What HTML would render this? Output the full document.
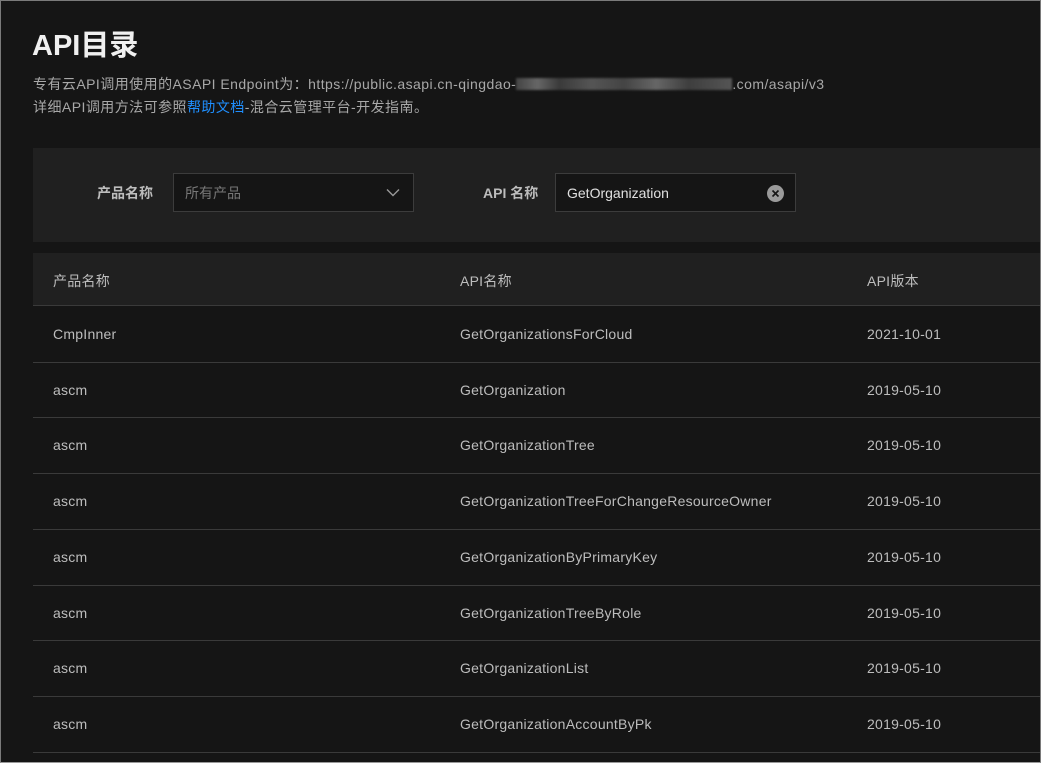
<!DOCTYPE html>
<html><head><meta charset="utf-8"><style>
*{margin:0;padding:0;box-sizing:border-box}
html,body{width:1041px;height:763px;overflow:hidden;background:#151515}
body{font-family:"Liberation Sans","Noto Sans CJK SC",sans-serif;color:#c8c8c8;position:relative}
.frame{position:absolute;left:0;top:0;width:1041px;height:763px;border:1px solid #7a7a7a;border-bottom-color:#999}
h1{position:absolute;left:32px;top:22px;font-size:29px;font-weight:bold;color:#f0f0f0;letter-spacing:0}
.desc{position:absolute;left:33px;font-size:14px;color:#a8a8a8;white-space:nowrap;letter-spacing:0.45px}
.blur{display:inline-block;width:216px;height:12px;vertical-align:-1px;background:linear-gradient(90deg,#444,#666 10%,#3a3a3a 20%,#555 35%,#444 50%,#666 65%,#3e3e3e 80%,#555);filter:blur(1px)}
a{color:#1f8fff;text-decoration:none}
.panel{position:absolute;left:33px;top:148px;width:1007px;height:94px;background:#202020}
.lbl{position:absolute;top:35px;font-size:14px;font-weight:bold;color:#bdbdbd}
.inp{position:absolute;top:25px;height:39px;border:1px solid #3c3c3c;background:#151515;font-size:14px;padding-left:11px;line-height:38px}
.th{position:absolute;left:33px;top:253px;width:1007px;height:53px;background:#202020;border-bottom:1px solid #3a3a3a}
.row{position:absolute;left:33px;width:1007px;border-bottom:1px solid #3a3a3a}
.c{position:absolute;font-size:14px;color:#bdbdbd;white-space:nowrap;letter-spacing:0.25px}
</style></head><body>
<div class="frame"></div>
<h1>API目录</h1>
<div class="desc" style="top:74px">专有云API调用使用的ASAPI Endpoint为：https://public.asapi.cn-qingdao-<span class="blur"></span>.com/asapi/v3</div>
<div class="desc" style="top:97px">详细API调用方法可参照<a>帮助文档</a>-混合云管理平台-开发指南。</div>
<div class="panel">
<div class="lbl" style="left:64px">产品名称</div>
<div class="inp" style="left:140px;width:241px;color:#777">所有产品
<svg style="position:absolute;right:13px;top:14px" width="14" height="9" viewBox="0 0 14 9"><path d="M1 1.5L7 7.5L13 1.5" stroke="#999" stroke-width="1.4" fill="none"/></svg></div>
<div class="lbl" style="left:450px">API 名称</div>
<div class="inp" style="left:522px;width:241px;color:#e0e0e0">GetOrganization
<svg style="position:absolute;right:11px;top:11px" width="17" height="17" viewBox="0 0 17 17"><circle cx="8.5" cy="8.5" r="8.5" fill="#9a9a9a"/><path d="M5.5 5.5L11.5 11.5M11.5 5.5L5.5 11.5" stroke="#151515" stroke-width="1.6"/></svg></div>
</div>
<div class="th">
<div class="c" style="left:20px;top:18px">产品名称</div>
<div class="c" style="left:427px;top:18px">API名称</div>
<div class="c" style="left:834px;top:18px">API版本</div>
</div>
<div class="row" style="top:307px;height:56px"><div class="c" style="left:20px;top:19px">CmpInner</div><div class="c" style="left:427px;top:19px">GetOrganizationsForCloud</div><div class="c" style="left:834px;top:19px">2021-10-01</div></div>
<div class="row" style="top:363px;height:55px"><div class="c" style="left:20px;top:19px">ascm</div><div class="c" style="left:427px;top:19px">GetOrganization</div><div class="c" style="left:834px;top:19px">2019-05-10</div></div>
<div class="row" style="top:418px;height:56px"><div class="c" style="left:20px;top:19px">ascm</div><div class="c" style="left:427px;top:19px">GetOrganizationTree</div><div class="c" style="left:834px;top:19px">2019-05-10</div></div>
<div class="row" style="top:474px;height:56px"><div class="c" style="left:20px;top:19px">ascm</div><div class="c" style="left:427px;top:19px">GetOrganizationTreeForChangeResourceOwner</div><div class="c" style="left:834px;top:19px">2019-05-10</div></div>
<div class="row" style="top:530px;height:56px"><div class="c" style="left:20px;top:19px">ascm</div><div class="c" style="left:427px;top:19px">GetOrganizationByPrimaryKey</div><div class="c" style="left:834px;top:19px">2019-05-10</div></div>
<div class="row" style="top:586px;height:55px"><div class="c" style="left:20px;top:19px">ascm</div><div class="c" style="left:427px;top:19px">GetOrganizationTreeByRole</div><div class="c" style="left:834px;top:19px">2019-05-10</div></div>
<div class="row" style="top:641px;height:56px"><div class="c" style="left:20px;top:19px">ascm</div><div class="c" style="left:427px;top:19px">GetOrganizationList</div><div class="c" style="left:834px;top:19px">2019-05-10</div></div>
<div class="row" style="top:697px;height:56px"><div class="c" style="left:20px;top:19px">ascm</div><div class="c" style="left:427px;top:19px">GetOrganizationAccountByPk</div><div class="c" style="left:834px;top:19px">2019-05-10</div></div>
</body></html>
